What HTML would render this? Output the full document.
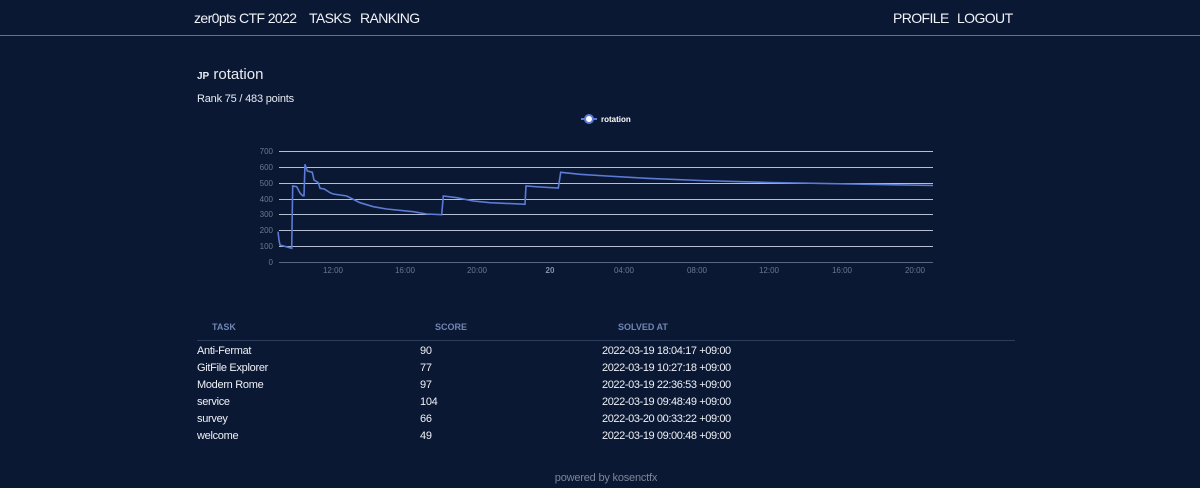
<!DOCTYPE html>
<html><head><meta charset="utf-8"><style>
body{margin:0;width:1200px;height:488px;background:#0b1833;font-family:"Liberation Sans",sans-serif;color:#e8ecf2;position:relative;overflow:hidden}
.a{position:absolute;white-space:nowrap}
.nav{font-size:14px;top:10px;color:#f0f3f8;letter-spacing:-0.6px}
.hl{position:absolute;left:0;top:35px;width:1200px;height:1px;background:#4a7aa6}
.th{font-size:9px;font-weight:bold;color:#6f86b3;top:322px}
.td{font-size:11px;color:#eef1f6;letter-spacing:-0.3px}
</style></head><body>
<div class="a nav" style="left:194px">zer0pts CTF 2022</div>
<div class="a nav" style="left:309px">TASKS</div>
<div class="a nav" style="left:360px">RANKING</div>
<div class="a nav" style="left:893px">PROFILE</div>
<div class="a nav" style="left:957px">LOGOUT</div>
<div class="hl"></div>
<div class="a" style="left:197px;top:66px;font-size:15px"><span style="font-size:10px;font-weight:bold">JP</span> rotation</div>
<div class="a" style="left:197px;top:93px;font-size:11px;letter-spacing:-0.2px">Rank 75 / 483 points</div>
<svg class="a" style="left:0;top:0" width="1200" height="300">
<line x1="581" y1="119" x2="597" y2="119" stroke="#5b7bd5" stroke-width="2"/>
<circle cx="589" cy="119" r="4" fill="#fff" stroke="#5b7bd5" stroke-width="2"/>
<text x="601" y="122" font-size="8" font-weight="bold" fill="#fff" font-family="Liberation Sans">rotation</text>
<g stroke="#b6bfd0" stroke-width="1">
<line x1="279" y1="151.5" x2="933" y2="151.5"/><line x1="279" y1="167.5" x2="933" y2="167.5"/>
<line x1="279" y1="183.5" x2="933" y2="183.5"/><line x1="279" y1="199.5" x2="933" y2="199.5"/>
<line x1="279" y1="214.5" x2="933" y2="214.5"/><line x1="279" y1="230.5" x2="933" y2="230.5"/>
<line x1="279" y1="246.5" x2="933" y2="246.5"/></g>
<line x1="279" y1="262.5" x2="933" y2="262.5" stroke="#5a6580"/>
<g font-size="8" fill="#6b7790" font-family="Liberation Sans" text-anchor="end">
<text x="273" y="154">700</text><text x="273" y="170">600</text><text x="273" y="186">500</text><text x="273" y="202">400</text><text x="273" y="217">300</text><text x="273" y="233">200</text><text x="273" y="249">100</text><text x="273" y="265">0</text></g>
<g font-size="8" fill="#6b7790" font-family="Liberation Sans" text-anchor="middle">
<text x="333" y="273">12:00</text><text x="405" y="273">16:00</text><text x="477" y="273">20:00</text><text x="550" y="273" font-weight="bold" fill="#8591a8">20</text><text x="624" y="273">04:00</text><text x="697" y="273">08:00</text><text x="769" y="273">12:00</text><text x="842" y="273">16:00</text><text x="915" y="273">20:00</text></g>
<polyline fill="none" stroke="#5b7bd5" stroke-width="1.6" points="278,231.7 279,240 280,245 291.7,248.3 292.7,186 296.7,186.7 300,193 302.7,195.7 304,195.7 305,164.3 307.3,171 312.3,172.3 314,180 318.3,182.7 320,188.3 324.3,189 330,192.7 333.3,194 346.7,196 360,202.7 373.3,206.7 386.7,209 413.3,211.7 426.7,214 441.7,214.7 443.3,196 456.7,197.7 473.3,201 490,202.7 513.3,203.7 525,204.3 526,186 540,187 558.3,188 560.7,172.3 580,174.3 606.7,176 646.7,178.3 700,180.5 770,182.5 933,185.5"/>
</svg>
<div class="a th" style="left:212px">TASK</div>
<div class="a th" style="left:435px">SCORE</div>
<div class="a th" style="left:618px">SOLVED AT</div>
<div class="a" style="left:197px;top:340px;width:818px;height:1px;background:#2d3d5e"></div>
<div class="a td" style="left:197px;top:343px;line-height:17px">Anti-Fermat<br>GitFile Explorer<br>Modern Rome<br>service<br>survey<br>welcome</div>
<div class="a td" style="left:420px;top:343px;line-height:17px">90<br>77<br>97<br>104<br>66<br>49</div>
<div class="a td" style="left:602px;top:343px;line-height:17px;letter-spacing:-0.4px">2022-03-19 18:04:17 +09:00<br>2022-03-19 10:27:18 +09:00<br>2022-03-19 22:36:53 +09:00<br>2022-03-19 09:48:49 +09:00<br>2022-03-20 00:33:22 +09:00<br>2022-03-19 09:00:48 +09:00</div>
<div class="a" style="left:0;width:1212px;text-align:center;top:472px;font-size:11px;color:#7d8597;letter-spacing:-0.2px">powered by kosenctfx</div>
</body></html>
